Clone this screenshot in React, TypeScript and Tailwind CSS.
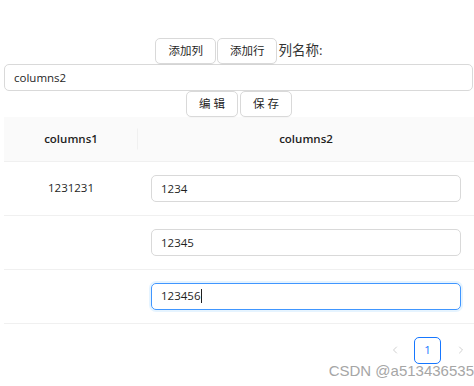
import { ChevronLeft, ChevronRight } from 'lucide-react';

const FONT = '"Open Sans", "Noto Sans CJK SC", sans-serif';

const rows = [
  { col1: '1231231', col2: '1234' },
  { col1: '', col2: '12345' },
  { col1: '', col2: '123456', focused: true },
];

function Btn({ children }: { children: React.ReactNode }) {
  return (
    <button
      type="button"
      className="h-[26px] rounded-[5px] border border-[#d9d9d9] bg-white px-[12px] text-[11.5px] leading-none text-[#1f1f1f] shadow-[0_1px_0_rgba(0,0,0,0.02)]"
    >
      {children}
    </button>
  );
}

export default function App() {
  return (
    <div
      className="h-[386px] w-[474px] overflow-hidden bg-white pl-[4px] text-[#1f1f1f]"
      style={{ fontFamily: FONT }}
    >
      <div className="flex h-[26px] items-center justify-center gap-[1px] mt-[38px]">
        <Btn>添加列</Btn>
        <Btn>添加行</Btn>
        <span className="-mt-[2px] text-[13.5px] text-[#333]">列名称:</span>
      </div>
      <input
        readOnly
        value="columns2"
        className="block h-[27px] w-[469px] rounded-[5px] border border-[#d9d9d9] px-[9px] text-[11.5px] text-[#1f1f1f] outline-none"
      />
      <div className="flex h-[26px] items-center justify-center gap-[2px]">
        <Btn>编 辑</Btn>
        <Btn>保 存</Btn>
      </div>

      <table className="w-[470px] table-fixed border-collapse text-[11.5px]">
        <colgroup>
          <col className="w-[134px]" />
          <col />
        </colgroup>
        <thead>
          <tr className="h-[44px] border-b border-[#f0f0f0] bg-[#fafafa]">
            <th className="relative font-semibold">
              columns1
              <span className="absolute right-0 top-1/2 h-[21px] w-px -translate-y-1/2 bg-[#f0f0f0]" />
            </th>
            <th className="font-semibold">columns2</th>
          </tr>
        </thead>
        <tbody>
          {rows.map((r, i) => (
            <tr key={i} className="h-[54px] border-b border-[#f0f0f0]">
              <td className="text-center">{r.col1}</td>
              <td className="px-[13px]">
                {r.focused ? (
                  <div className="flex h-[27px] items-center rounded-[5px] border border-[#4096ff] px-[9px] shadow-[0_0_0_2px_rgba(5,145,255,0.1)]">
                    <span>{r.col2}</span>
                    <span className="ml-px h-[14px] w-px bg-[#1f1f1f]" />
                  </div>
                ) : (
                  <input
                    readOnly
                    value={r.col2}
                    className="block h-[27px] w-full rounded-[5px] border border-[#d9d9d9] px-[9px] text-[11.5px] outline-none"
                  />
                )}
              </td>
            </tr>
          ))}
        </tbody>
      </table>

      <div className="mt-[13px] flex items-center justify-end gap-[6px]">
        <span className="flex h-[27px] w-[27px] items-center justify-center text-[#bfbfbf]">
          <ChevronLeft size={12} strokeWidth={1.5} />
        </span>
        <span className="flex h-[27px] w-[27px] items-center justify-center rounded-[5px] border border-[#1677ff] text-[11.5px] font-medium text-[#1677ff]">
          1
        </span>
        <span className="flex h-[27px] w-[27px] items-center justify-center text-[#bfbfbf]">
          <ChevronRight size={12} strokeWidth={1.5} />
        </span>
      </div>
      <div
        className="-mt-[2px] text-right text-[15px] leading-[18px] text-[#a6a6a6]"
        style={{ fontFamily: '"Liberation Sans", Arial, sans-serif' }}
      >
        CSDN @a513436535
      </div>
    </div>
  );
}
